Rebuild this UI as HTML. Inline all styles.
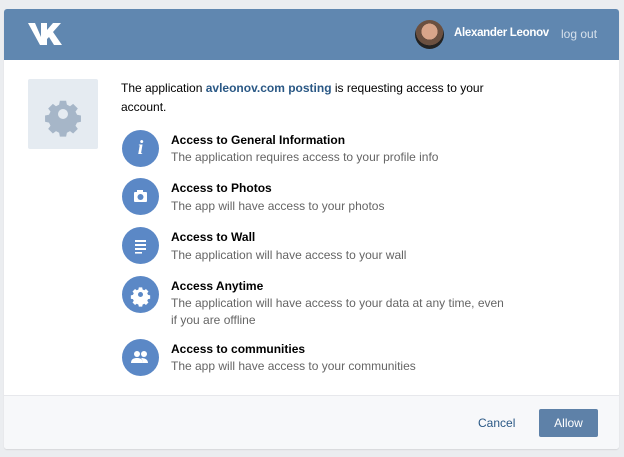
<!DOCTYPE html>
<html><head><meta charset="utf-8"><style>
body{margin:0;width:624px;height:457px;background:#ebedf0;font-family:"Liberation Sans",sans-serif;position:relative;overflow:hidden}
.card{position:absolute;left:4px;top:9px;width:615px;height:440px;background:#fff;border-radius:3px;overflow:hidden;box-shadow:0 1px 1px #d7d8db}
.hd{position:absolute;left:0;top:0;width:615px;height:51px;background:#6087b0}
.ft{position:absolute;left:0;top:386px;width:615px;height:54px;background:#f7f8fa;border-top:1px solid #e7e8ec}
.a{position:absolute}
.c{position:absolute;left:118px;width:37px;height:37px;border-radius:50%;background:#5b88c6}
.t{position:absolute;left:167px;font-size:12px;font-weight:bold;color:#000}
.d{position:absolute;left:167px;font-size:12px;color:#656565;line-height:17px}
</style></head><body>
<div class="card">
<div class="hd">
<svg class="a" style="left:23px;top:13px" width="40" height="24" viewBox="0 0 40 24"><path fill="#fff" d="M1 1h7l6 14V1h6v7l6-7h8l-8 9 9 13h-8l-5-8-2 2v6h-7L1 1z"/></svg>
<div class="a" style="left:411px;top:11px;width:29px;height:29px;border-radius:50%;background:radial-gradient(circle at 50% 40%,#d9a58a 0 35%,#6b5040 36% 60%,#222 61%)"></div>
<div class="a" style="left:450px;top:18px;color:#fff;font-size:11.5px;font-weight:bold;letter-spacing:-0.3px">Alexander Leonov</div>
<div class="a" style="left:557px;top:18px;color:#d6e0eb;font-size:12px">log out</div>
</div>
<div class="a" style="left:24px;top:70px;width:70px;height:70px;background:#e5ebf1;border-radius:2px">
<svg width="70" height="70" viewBox="0 0 70 70"><g fill="#a6b6c8" transform="translate(35 35) scale(0.78)">
<path d="M-4-17h8l1 5 4 2 4-3 6 6-3 4 2 4 5 1v8l-5 1-2 4 3 4-6 6-4-3-4 2-1 5h-8l-1-5-4-2-4 3-6-6 3-4-2-4-5-1v-8l5-1 2-4-3-4 6-6 4 3 4-2z"/></g><circle cx="35" cy="35" r="5" fill="#e5ebf1"/></svg></div>
<div class="a" style="left:117px;top:70px;font-size:12px;line-height:19px;color:#000;width:370px">The application <b style="color:#2a5885">avleonov.com posting</b> is requesting access to your account.</div>

<div class="c" style="top:121px"><div style="color:#fff;font:italic bold 20px 'Liberation Serif',serif;text-align:center;line-height:37px">i</div></div>
<div class="t" style="top:124px">Access to General Information</div>
<div class="d" style="top:140px">The application requires access to your profile info</div>

<div class="c" style="top:169px"><svg width="37" height="37"><rect x="12" y="14" width="13" height="10" rx="1" fill="#fff"/><rect x="15" y="12" width="6" height="3" fill="#fff"/><circle cx="18.5" cy="19" r="3" fill="#5b88c6"/></svg></div>
<div class="t" style="top:172px">Access to Photos</div>
<div class="d" style="top:189px">The app will have access to your photos</div>

<div class="c" style="top:218px"><svg width="37" height="37" fill="#fff"><rect x="13" y="13" width="11" height="2"/><rect x="13" y="17" width="11" height="2"/><rect x="13" y="21" width="11" height="2"/><rect x="13" y="25" width="7" height="1.6"/></svg></div>
<div class="t" style="top:221px">Access to Wall</div>
<div class="d" style="top:238px">The application will have access to your wall</div>

<div class="c" style="top:267px"><svg width="37" height="37"><g fill="#fff" transform="translate(18.5 18.5) scale(0.42)"><path d="M-4-17h8l1 5 4 2 4-3 6 6-3 4 2 4 5 1v8l-5 1-2 4 3 4-6 6-4-3-4 2-1 5h-8l-1-5-4-2-4 3-6-6 3-4-2-4-5-1v-8l5-1 2-4-3-4 6-6 4 3 4-2z"/></g><circle cx="18.5" cy="18.5" r="2.5" fill="#5b88c6"/></svg></div>
<div class="t" style="top:270px">Access Anytime</div>
<div class="d" style="top:286px">The application will have access to your data at any time, even<br>if you are offline</div>

<div class="c" style="top:330px"><svg width="37" height="37" fill="#fff"><circle cx="15" cy="15" r="3"/><circle cx="22" cy="15" r="3"/><path d="M9 24c0-4 3-5 6-5s6 1 6 5z"/><path d="M19 19c3 0 7 1 7 5h-5c0-2-1-4-2-5z"/></svg></div>
<div class="t" style="top:333px">Access to communities</div>
<div class="d" style="top:349px">The app will have access to your communities</div>

<div class="ft">
<div class="a" style="left:474px;top:20px;font-size:12px;color:#2a5885">Cancel</div>
<div class="a" style="left:535px;top:13px;width:59px;height:28px;background:#5e81a8;border-radius:2px;color:#fff;font-size:12px;text-align:center;line-height:28px">Allow</div>
</div>
</div>
</body></html>
